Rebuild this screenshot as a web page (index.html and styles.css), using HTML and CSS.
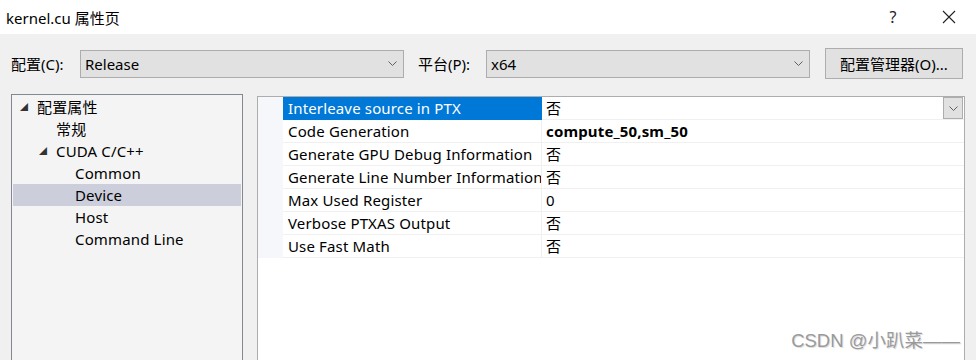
FILE: index.html
```html
<!DOCTYPE html>
<html>
    <head>
        <meta charset="utf-8">
        <link rel="stylesheet" href="styles.css">
    </head>
    <body>
        <div class="dialog">
            <header class="titlebar">
                <span class="title">kernel.cu 属性页</span>
                <span class="title-btn help">?</span>
                <span class="title-btn close">
                    <svg width="14" height="14" viewBox="0 0 14 14"><path d="M1 1 L13 13 M13 1 L1 13" stroke="#222" stroke-width="1.1" fill="none"/></svg>
                </span>
            </header>
            <div class="toolbar">
                <span class="label config-label">配置(C):</span>
                <div class="combo">
                    <span>Release</span>
                    <svg class="chev" width="9" height="5" viewBox="0 0 9 5"><path d="M0.5 0.5 L4.5 4.5 L8.5 0.5" stroke="#606060" fill="none"/></svg>
                </div>
                <span class="label platform-label">平台(P):</span>
                <div class="combo">
                    <span>x64</span>
                    <svg class="chev" width="9" height="5" viewBox="0 0 9 5"><path d="M0.5 0.5 L4.5 4.5 L8.5 0.5" stroke="#606060" fill="none"/></svg>
                </div>
                <button class="manager">配置管理器(O)...</button>
            </div>
            <div class="main">
                <aside class="tree">
                    <ul>
                        <li class="lvl-0"><span class="arrow">◢</span>配置属性</li>
                        <li class="lvl-1">常规</li>
                        <li class="lvl-1 has-arrow"><span class="arrow">◢</span>CUDA C/C++</li>
                        <li class="lvl-2">Common</li>
                        <li class="lvl-2 selected">Device</li>
                        <li class="lvl-2">Host</li>
                        <li class="lvl-2">Command Line</li>
                    </ul>
                </aside>
                <section class="grid">
                    <div class="row active">
                        <div class="gutter"></div>
                        <div class="name">Interleave source in PTX</div>
                        <div class="value">否
                            <span class="drop"><svg width="9" height="5" viewBox="0 0 9 5"><path d="M0.5 0.5 L4.5 4.5 L8.5 0.5" stroke="#606060" fill="none"/></svg></span>
                        </div>
                    </div>
                    <div class="row">
                        <div class="gutter"></div>
                        <div class="name">Code Generation</div>
                        <div class="value bold">compute_50,sm_50</div>
                    </div>
                    <div class="row">
                        <div class="gutter"></div>
                        <div class="name">Generate GPU Debug Information</div>
                        <div class="value">否</div>
                    </div>
                    <div class="row">
                        <div class="gutter"></div>
                        <div class="name">Generate Line Number Information</div>
                        <div class="value">否</div>
                    </div>
                    <div class="row">
                        <div class="gutter"></div>
                        <div class="name">Max Used Register</div>
                        <div class="value">0</div>
                    </div>
                    <div class="row">
                        <div class="gutter"></div>
                        <div class="name">Verbose PTXAS Output</div>
                        <div class="value">否</div>
                    </div>
                    <div class="row">
                        <div class="gutter"></div>
                        <div class="name">Use Fast Math</div>
                        <div class="value">否</div>
                    </div>
                    <div class="watermark">CSDN @小趴菜——</div>
                </section>
            </div>
        </div>
    </body>
</html>
```

FILE: styles.css
```css
*, *:after, *:before {
    box-sizing: border-box;
    margin: 0;
    padding: 0;
}
body {
    width: 976px;
    height: 360px;
    overflow: hidden;
    background: #f0f0f0;
    font-family: "Noto Sans", "Noto Sans CJK SC", sans-serif;
    font-size: 15px;
    color: #000;
}
.dialog {
    height: 360px;
    display: flex;
    flex-direction: column;
}
.titlebar {
    height: 34px;
    background: #fff;
    display: flex;
    align-items: center;
    padding-left: 6px;
}
.title {
    flex: 1;
    font-size: 15px;
}
.title-btn {
    display: flex;
    align-items: center;
    justify-content: center;
}
.help {
    width: 16px;
    margin-right: 41px;
    font-size: 16px;
    color: #222;
}
.close {
    width: 14px;
    margin-right: 20px;
}
.toolbar {
    display: flex;
    align-items: center;
    height: 31px;
    margin-top: 14px;
    padding-left: 11px;
}
.label {
    font-size: 15px;
}
.config-label {
    width: 69px;
}
.platform-label {
    width: 68px;
    margin-left: 14px;
}
.combo {
    width: 324px;
    height: 28px;
    border: 1px solid #adadad;
    background: #e1e1e1;
    display: flex;
    align-items: center;
    padding-left: 4px;
}
.combo span {
    flex: 1;
}
.chev {
    margin-right: 6px;
}
.manager {
    width: 138px;
    height: 31px;
    margin-left: 15px;
    border: 1px solid #adadad;
    background: #e1e1e1;
    font-family: inherit;
    font-size: 15px;
    color: #000;
}
.main {
    flex: 1;
    display: flex;
    margin-top: 15px;
    padding-left: 11px;
    min-height: 0;
}
.tree {
    width: 232px;
    background: #f4f4f4;
    border: 1px solid #828790;
    border-bottom: none;
    padding: 1px 1px 0;
}
.tree ul {
    list-style: none;
}
.tree li {
    height: 22px;
    line-height: 22px;
    white-space: nowrap;
    letter-spacing: 0.15px;
}
.arrow {
    display: inline-block;
    font-size: 8px;
    width: 17px;
    color: #333;
    vertical-align: top;
    line-height: 22px;
}
.lvl-0 {
    padding-left: 7px;
}
.lvl-1 {
    padding-left: 43px;
}
.lvl-1.has-arrow {
    padding-left: 26px;
}
.lvl-2 {
    padding-left: 62px;
}
.tree li.selected {
    background: #cccedb;
}
.grid {
    width: 708px;
    margin-left: 14px;
    margin-top: 2px;
    background: #fff;
    border: 1px solid #adadad;
    border-bottom: none;
    position: relative;
}
.row {
    display: flex;
    height: 23px;
}
.gutter {
    width: 25px;
    background: #f5f7fb;
}
.name, .value {
    border-bottom: 1px solid #f0f0f0;
    padding-top: 1px;
    line-height: 21px;
    white-space: nowrap;
    letter-spacing: 0.15px;
}
.name {
    width: 259px;
    padding-left: 5px;
    overflow: hidden;
    border-right: 1px solid #f0f0f0;
}
.value {
    flex: 1;
    padding-left: 4px;
    display: flex;
}
.value.bold {
    font-weight: bold;
}
.row.active .name {
    background: #0078d7;
    color: #fff;
    border-right: 2px solid #0078d7;
    border-bottom-color: #0078d7;
}
.row.active .value {
    padding-top: 0;
    line-height: 22px;
    padding-right: 1px;
}
.row.active .value .drop {
    margin-top: 0;
}
.drop {
    margin-left: auto;
    width: 20px;
    height: 22px;
    border: 1px solid #adadad;
    background: #e1e1e1;
    display: flex;
    align-items: center;
    justify-content: center;
}
.watermark {
    position: absolute;
    right: 4px;
    bottom: 8px;
    font-family: "Liberation Sans", "Noto Sans CJK SC", sans-serif;
    font-size: 18.5px;
    color: #9a9a9a;
    text-shadow: 1px 1px 0 #e0e0e0;
}
```
